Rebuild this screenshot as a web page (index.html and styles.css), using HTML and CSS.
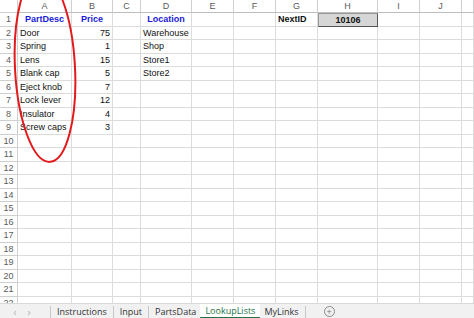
FILE: index.html
```html
<!DOCTYPE html>
<html lang="en">
<head>
  <meta charset="UTF-8">
  <title>LookupLists</title>
  <link rel="stylesheet" href="styles.css">
</head>
<body>
  <div class="sheet">
    <div class="grid" id="grid"></div>

    <!-- red ring drawn round column A -->
    <svg class="ring" width="474" height="180" viewBox="0 0 474 180">
      <ellipse cx="45" cy="68" rx="30" ry="94" fill="none" stroke="#e3191c" stroke-width="2" transform="rotate(-3 45 68)"/>
    </svg>
  </div>

  <div class="tabbar">
    <span class="nav">&#8249;</span>
    <span class="nav">&#8250;</span>
    <span class="sep"></span>
    <span class="tab">Instructions</span>
    <span class="sep"></span>
    <span class="tab">Input</span>
    <span class="sep"></span>
    <span class="tab">PartsData</span>
    <span class="tab active">LookupLists</span>
    <span class="tab">MyLinks</span>
    <span class="sep"></span>
    <span class="add">+</span>
  </div>

  <script>
    const cols = ['A', 'B', 'C', 'D', 'E', 'F', 'G', 'H', 'I', 'J', ''];
    const data = {
      1: { A: ['PartDesc', 'head'], B: ['Price', 'head'], D: ['Location', 'head'], G: ['NextID', 'label'], H: ['10106', 'nextid'] },
      2: { A: ['Door'], B: ['75', 'num'], D: ['Warehouse'] },
      3: { A: ['Spring'], B: ['1', 'num'], D: ['Shop'] },
      4: { A: ['Lens'], B: ['15', 'num'], D: ['Store1'] },
      5: { A: ['Blank cap'], B: ['5', 'num'], D: ['Store2'] },
      6: { A: ['Eject knob'], B: ['7', 'num'] },
      7: { A: ['Lock lever'], B: ['12', 'num'] },
      8: { A: ['Insulator'], B: ['4', 'num'] },
      9: { A: ['Screw caps'], B: ['3', 'num'] }
    };

    const grid = document.getElementById('grid');
    function cell(text, cls) {
      const d = document.createElement('div');
      d.className = 'cell ' + (cls || '');
      d.textContent = text || '';
      grid.appendChild(d);
    }

    cell('', 'corner');
    cols.forEach(c => cell(c, 'colhead'));
    for (let r = 1; r <= 22; r++) {
      cell(r, 'rowhead');
      cols.forEach(c => {
        const v = (data[r] || {})[c];
        cell(v ? v[0] : '', v ? v[1] : '');
      });
    }
  </script>
</body>
</html>
```

FILE: styles.css
```css
body { margin: 0; background: #fff; font-family: "Liberation Sans", Arial, sans-serif; overflow: hidden; }

.sheet { position: relative; height: 303px; overflow: hidden; }

.grid {
  display: grid;
  grid-template-columns: 18px 54px 41px 28px 51px 42px 42px 42px 60px 42px 42px 12px;
  grid-template-rows: 13px;
  grid-auto-rows: 13.5px;
}

.cell {
  border-right: 1px solid #dcdcdc;
  border-bottom: 1px solid #dcdcdc;
  font-size: 9px;
  line-height: 12px;
  padding: 0 2px;
  color: #111;
  white-space: nowrap;
  overflow: hidden;
  box-sizing: border-box;
}

.colhead, .rowhead, .corner { color: #5a5a5a; text-align: center; border-color: #cfcfcf; }
.colhead { border-bottom-color: #bdbdbd; }
.rowhead { padding: 0; }

.head { color: #1a1adb; font-weight: bold; text-align: center; }
.label { font-weight: bold; }
.num { text-align: right; }
.nextid {
  background: #d6d6d6;
  border: 1px solid #555;
  border-top-color: #999;
  border-left-color: #999;
  font-weight: bold;
  text-align: center;
}

.ring { position: absolute; left: 0; top: 0; pointer-events: none; }

.tabbar {
  height: 15px;
  background: #f1f1f1;
  border-top: 1px solid #d8d8d8;
  display: flex;
  align-items: center;
  font-family: "Open Sans", "Noto Sans", sans-serif;
  font-size: 9px;
  color: #333;
  padding-left: 8px;
}
.nav { color: #b0b0b0; width: 14px; text-align: center; font-size: 10px; }
.sep { width: 1px; height: 12px; background: #c8c8c8; margin: 0 2px 0 14px; }
.tab { padding: 0 4px; line-height: 15px; }
.tab + .sep { margin: 0 2px; }
.tab.active {
  background: #fff;
  color: #217346;
  border-bottom: 2px solid #217346;
  line-height: 13px;
  height: 13px;
  padding: 0 5px;
}
.add {
  margin-left: 16px;
  width: 9px;
  height: 9px;
  border: 1px solid #8a8a8a;
  border-radius: 50%;
  color: #777;
  font-size: 9px;
  line-height: 9px;
  text-align: center;
}
```
